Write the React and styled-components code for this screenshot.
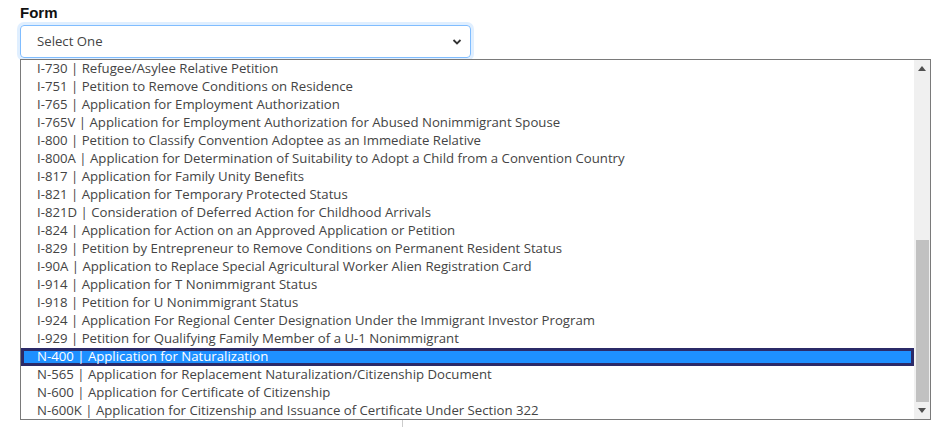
import React from 'react';
import styled, { createGlobalStyle } from 'styled-components';

const GlobalStyle = createGlobalStyle`
  html, body {
    margin: 0;
    padding: 0;
    background: #fff;
  }
  body {
    font-family: "Open Sans", "Liberation Sans", sans-serif;
  }
`;

const Page = styled.div`
  width: 945px;
  height: 427px;
  overflow: hidden;
  padding: 0 20px;
  box-sizing: border-box;
`;

const FieldLabel = styled.div`
  font-family: "Liberation Sans", Arial, sans-serif;
  font-weight: bold;
  font-size: 15px;
  color: #111;
  height: 25px;
  line-height: 25px;
`;

const SelectWrap = styled.div`
  position: relative;
  width: 451px;
`;

const SelectBox = styled.div`
  height: 33px;
  box-sizing: border-box;
  border: 1px solid #80bdff;
  border-radius: 4px;
  box-shadow: 0 0 0 3px rgba(0, 123, 255, 0.12);
  display: flex;
  align-items: center;
  justify-content: space-between;
  padding: 0 8px 2px 16px;
  font-size: 13.2px;
  color: #444;
`;

const Chevron = styled.svg`
  width: 10px;
  height: 10px;
  margin-top: 2px;
`;

const DropList = styled.div`
  position: absolute;
  top: 34px;
  left: 0;
  width: 911px;
  height: 361px;
  box-sizing: border-box;
  border: 1px solid #7a7a7a;
  background: #fff;
  display: flex;
  z-index: 5;
`;

const Options = styled.div`
  flex: 1;
  display: flex;
  flex-direction: column;
  overflow: hidden;
`;

const Option = styled.div`
  height: 18px;
  flex-shrink: 0;
  box-sizing: border-box;
  padding-left: ${(p) => (p.$selected ? '13px' : '16px')};
  font-size: 13.2px;
  white-space: nowrap;
  color: ${(p) => (p.$selected ? '#fff' : '#444')};
  background: ${(p) => (p.$selected ? '#1e90ff' : 'transparent')};
  border: ${(p) => (p.$selected ? '3px solid #2b2a68' : 'none')};
  line-height: ${(p) => (p.$selected ? '10px' : '16px')};
`;

const ScrollBar = styled.div`
  width: 16px;
  background: #f0f0f0;
  display: flex;
  flex-direction: column;
`;

const ScrollButton = styled.div`
  height: 17px;
  display: flex;
  align-items: center;
  justify-content: center;
`;

const ScrollTrack = styled.div`
  flex: 1;
  display: flex;
  flex-direction: column;
  justify-content: flex-end;
  padding: 0 1px 0 2px;
`;

const ScrollThumb = styled.div`
  height: 50%;
  background: #c1c1c1;
`;

const Below = styled.div`
  display: flex;
  margin-top: 10px;
  height: 400px;
`;

const BelowLeft = styled.div`
  width: 383px;
  box-sizing: border-box;
  border-right: 1px solid #ccc;
  padding-left: 42px;
  padding-top: 358px;
  font-family: "Liberation Sans", Arial, sans-serif;
  font-weight: bold;
  font-size: 16px;
  color: #2b2a68;
`;

const options = [
  'I-730 | Refugee/Asylee Relative Petition',
  'I-751 | Petition to Remove Conditions on Residence',
  'I-765 | Application for Employment Authorization',
  'I-765V | Application for Employment Authorization for Abused Nonimmigrant Spouse',
  'I-800 | Petition to Classify Convention Adoptee as an Immediate Relative',
  'I-800A | Application for Determination of Suitability to Adopt a Child from a Convention Country',
  'I-817 | Application for Family Unity Benefits',
  'I-821 | Application for Temporary Protected Status',
  'I-821D | Consideration of Deferred Action for Childhood Arrivals',
  'I-824 | Application for Action on an Approved Application or Petition',
  'I-829 | Petition by Entrepreneur to Remove Conditions on Permanent Resident Status',
  'I-90A | Application to Replace Special Agricultural Worker Alien Registration Card',
  'I-914 | Application for T Nonimmigrant Status',
  'I-918 | Petition for U Nonimmigrant Status',
  'I-924 | Application For Regional Center Designation Under the Immigrant Investor Program',
  'I-929 | Petition for Qualifying Family Member of a U-1 Nonimmigrant',
  'N-400 | Application for Naturalization',
  'N-565 | Application for Replacement Naturalization/Citizenship Document',
  'N-600 | Application for Certificate of Citizenship',
  'N-600K | Application for Citizenship and Issuance of Certificate Under Section 322',
];

const selected = 'N-400 | Application for Naturalization';

const Arrow = ({ up }) => (
  <svg width="8" height="5" viewBox="0 0 8 5">
    <path d={up ? 'M0 5 L4 0 L8 5 Z' : 'M0 0 L4 5 L8 0 Z'} fill="#505050" />
  </svg>
);

const App = () => {
  return (
    <Page>
      <GlobalStyle />
      <FieldLabel>Form</FieldLabel>
      <SelectWrap>
        <SelectBox>
          <span>Select One</span>
          <Chevron viewBox="0 0 10 10">
            <path d="M1.5 3 L5 6.5 L8.5 3" fill="none" stroke="#333" strokeWidth="1.8" />
          </Chevron>
        </SelectBox>
        <DropList>
          <Options>
            {options.map((o) => (
              <Option key={o} $selected={o === selected}>
                {o}
              </Option>
            ))}
          </Options>
          <ScrollBar>
            <ScrollButton>
              <Arrow up />
            </ScrollButton>
            <ScrollTrack>
              <ScrollThumb />
            </ScrollTrack>
            <ScrollButton>
              <Arrow />
            </ScrollButton>
          </ScrollBar>
        </DropList>
      </SelectWrap>
      <Below>
        <BelowLeft>Schedule</BelowLeft>
      </Below>
    </Page>
  );
};

export default App;
